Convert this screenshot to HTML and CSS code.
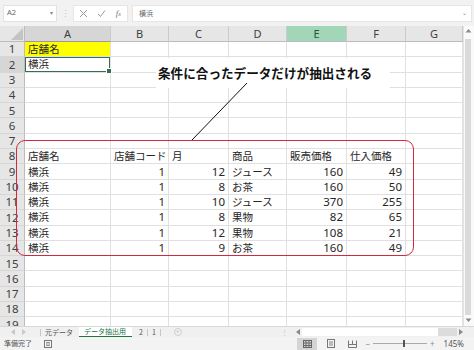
FILE: index.html
```html
<!DOCTYPE html>
<html lang="ja">
<head>
<meta charset="utf-8">
<link rel="stylesheet" href="styles.css">
</head>
<body>
<div class="app">
  <div class="fbar">
    <div class="namebox"><span>A2</span><span class="caret">▾</span></div>
    <div class="vdots">⋮</div>
    <div class="fxbox">
      <svg class="ic" width="9" height="9" viewBox="0 0 9 9"><path d="M1 1L8 8M8 1L1 8" stroke="#9a9a9a" stroke-width="1"/></svg>
      <svg class="ic" width="9" height="9" viewBox="0 0 9 9"><path d="M1 5L3.5 7.5L8 1.5" stroke="#9a9a9a" stroke-width="1" fill="none"/></svg>
      <span class="fx">f<span class="fxs">x</span></span>
    </div>
    <div class="finput"><span>横浜</span><span class="caret">⌄</span></div>
  </div>

  <div class="main">
    <div class="sheet">
      <div class="grid">
        <div class="corner"><svg width="12" height="12" viewBox="0 0 12 12"><path d="M12 0V12H0Z" fill="#c4c4c4"/></svg></div>
        <div class="ch sel">A</div><div class="ch">B</div><div class="ch">C</div><div class="ch">D</div><div class="ch hl">E</div><div class="ch">F</div><div class="ch">G</div>

        <div class="rh">1</div><div class="c a1">店舗名</div><div class="c"></div><div class="c"></div><div class="c"></div><div class="c"></div><div class="c"></div><div class="c"></div>
        <div class="rh rsel">2</div><div class="c active">横浜</div><div class="c"></div><div class="c"></div><div class="c"></div><div class="c"></div><div class="c"></div><div class="c"></div>
        <div class="rh">3</div><div class="c"></div><div class="c"></div><div class="c"></div><div class="c"></div><div class="c"></div><div class="c"></div><div class="c"></div>
        <div class="rh">4</div><div class="c"></div><div class="c"></div><div class="c"></div><div class="c"></div><div class="c"></div><div class="c"></div><div class="c"></div>
        <div class="rh">5</div><div class="c"></div><div class="c"></div><div class="c"></div><div class="c"></div><div class="c"></div><div class="c"></div><div class="c"></div>
        <div class="rh">6</div><div class="c"></div><div class="c"></div><div class="c"></div><div class="c"></div><div class="c"></div><div class="c"></div><div class="c"></div>
        <div class="rh">7</div><div class="c"></div><div class="c"></div><div class="c"></div><div class="c"></div><div class="c"></div><div class="c"></div><div class="c"></div>
        <div class="rh">8</div><div class="c">店舗名</div><div class="c">店舗コード</div><div class="c">月</div><div class="c">商品</div><div class="c">販売価格</div><div class="c">仕入価格</div><div class="c"></div>
        <div class="rh">9</div><div class="c">横浜</div><div class="c n">1</div><div class="c n">12</div><div class="c">ジュース</div><div class="c n">160</div><div class="c n">49</div><div class="c"></div>
        <div class="rh">10</div><div class="c">横浜</div><div class="c n">1</div><div class="c n">8</div><div class="c">お茶</div><div class="c n">160</div><div class="c n">50</div><div class="c"></div>
        <div class="rh">11</div><div class="c">横浜</div><div class="c n">1</div><div class="c n">10</div><div class="c">ジュース</div><div class="c n">370</div><div class="c n">255</div><div class="c"></div>
        <div class="rh">12</div><div class="c">横浜</div><div class="c n">1</div><div class="c n">8</div><div class="c">果物</div><div class="c n">82</div><div class="c n">65</div><div class="c"></div>
        <div class="rh">13</div><div class="c">横浜</div><div class="c n">1</div><div class="c n">12</div><div class="c">果物</div><div class="c n">108</div><div class="c n">21</div><div class="c"></div>
        <div class="rh">14</div><div class="c">横浜</div><div class="c n">1</div><div class="c n">9</div><div class="c">お茶</div><div class="c n">160</div><div class="c n">49</div><div class="c"></div>
        <div class="rh">15</div><div class="c"></div><div class="c"></div><div class="c"></div><div class="c"></div><div class="c"></div><div class="c"></div><div class="c"></div>
        <div class="rh">16</div><div class="c"></div><div class="c"></div><div class="c"></div><div class="c"></div><div class="c"></div><div class="c"></div><div class="c"></div>
        <div class="rh">17</div><div class="c"></div><div class="c"></div><div class="c"></div><div class="c"></div><div class="c"></div><div class="c"></div><div class="c"></div>
        <div class="rh">18</div><div class="c"></div><div class="c"></div><div class="c"></div><div class="c"></div><div class="c"></div><div class="c"></div><div class="c"></div>
        <div class="rh">19</div><div class="c"></div><div class="c"></div><div class="c"></div><div class="c"></div><div class="c"></div><div class="c"></div><div class="c"></div>
      </div>

      <div class="callout">条件に合ったデータだけが抽出される</div>
      <svg class="pointer" width="463" height="300" viewBox="0 0 463 300"><line x1="192" y1="114" x2="247" y2="57" stroke="#111" stroke-width="1"/></svg>
      <div class="redbox"></div>
    </div>

    <div class="vscroll">
      <svg class="arr" width="7" height="5" viewBox="0 0 7 5"><path d="M0.5 4.5L3.5 1L6.5 4.5Z" fill="#8a8a8a"/></svg>
      <div class="thumb"></div>
      <svg class="arr" width="7" height="5" viewBox="0 0 7 5"><path d="M0.5 0.5L3.5 4L6.5 0.5Z" fill="#8a8a8a"/></svg>
    </div>
  </div>

  <div class="tabbar">
    <div class="navs">
      <svg width="4" height="6" viewBox="0 0 4 6"><path d="M4 0V6L0 3Z" fill="#c8c8c8"/></svg>
      <svg width="4" height="6" viewBox="0 0 4 6"><path d="M0 0V6L4 3Z" fill="#c8c8c8"/></svg>
    </div>
    <span class="sep"></span>
    <span class="tab">元データ</span>
    <span class="tab on">データ抽出用</span>
    <span class="tab">2</span>
    <span class="sep"></span>
    <span class="tab">1</span>
    <span class="sep"></span>
    <span class="plus">+</span>
    <span class="grip">⋮</span>
    <div class="hscroll">
      <svg width="4" height="6" viewBox="0 0 4 6"><path d="M4 0V6L0 3Z" fill="#8a8a8a"/></svg>
      <div class="htrack"><div class="hthumb"></div></div>
      <svg width="4" height="6" viewBox="0 0 4 6"><path d="M0 0V6L4 3Z" fill="#8a8a8a"/></svg>
    </div>
  </div>

  <div class="status">
    <span class="ready">準備完了</span>
    <svg class="macro" width="8" height="8" viewBox="0 0 8 8"><rect x="0.5" y="0.5" width="7" height="7" fill="none" stroke="#777"/><path d="M2 2.5H6M2 4H6M2 5.5H6" stroke="#999"/></svg>
    <div class="views">
      <span class="view on"><svg width="9" height="8" viewBox="0 0 9 8"><rect x="0.5" y="0.5" width="8" height="7" fill="none" stroke="#666"/><path d="M0.5 3H8.5M0.5 5.5H8.5M3 0.5V7.5M6 0.5V7.5" stroke="#666"/></svg></span>
      <span class="view"><svg width="8" height="9" viewBox="0 0 8 9"><rect x="0.5" y="0.5" width="7" height="8" fill="none" stroke="#777"/><rect x="2" y="2" width="4" height="5" fill="#bbb"/></svg></span>
      <span class="view"><svg width="9" height="8" viewBox="0 0 9 8"><path d="M0.5 0.5V7.5H8.5V0.5M4.5 0.5V4.5M0.5 4.5H8.5" fill="none" stroke="#777"/></svg></span>
    </div>
    <div class="zoom">
      <span class="zm">−</span>
      <div class="slider"><div class="knob"></div></div>
      <span class="zm">+</span>
      <span class="pct">145%</span>
    </div>
  </div>
</div>
</body>
</html>
```

FILE: styles.css
```css
* { box-sizing: border-box; }
html, body { margin: 0; padding: 0; }
body {
  width: 474px;
  height: 350px;
  overflow: hidden;
  background: #ffffff;
  font-family: "Noto Sans CJK JP", "Noto Sans", sans-serif;
}
.app {
  width: 474px;
  height: 350px;
  display: flex;
  flex-direction: column;
}

/* formula bar */
.fbar {
  height: 26px;
  flex: none;
  background: #f2f2f2;
  display: flex;
  align-items: center;
  padding: 4px 2px 4px 3px;
  gap: 0;
}
.namebox {
  width: 54px;
  height: 17px;
  background: #fff;
  border: 1px solid #e2e2e2;
  display: flex;
  align-items: center;
  justify-content: space-between;
  padding: 0 3px 0 3px;
  font: 7.5px/1 "Noto Sans", sans-serif;
  color: #666;
}
.caret { font-size: 6px; color: #888; }
.vdots {
  width: 16px;
  text-align: center;
  font: 9px/1 "Noto Sans", sans-serif;
  color: #c4c4c4;
}
.fxbox {
  width: 55px;
  height: 17px;
  background: #fff;
  border: 1px solid #e6e6e6;
  display: flex;
  align-items: center;
  justify-content: space-between;
  padding: 0 6px 0 5px;
}
.fx {
  font: italic 9px/1 "Liberation Serif", serif;
  color: #777;
}
.fxs { font-size: 6px; }
.finput {
  flex: 1;
  margin-left: 4px;
  height: 17px;
  background: #fff;
  border: 1px solid #e6e6e6;
  display: flex;
  align-items: center;
  justify-content: space-between;
  padding: 0 4px 0 6px;
  font: 7px/1 "Noto Sans CJK JP", sans-serif;
  color: #666;
}

/* sheet */
.main {
  height: 300px;
  flex: none;
  display: flex;
}
.sheet {
  position: relative;
  width: 463px;
  height: 300px;
  overflow: hidden;
}
.grid {
  display: grid;
  grid-template-columns: 25px 86px 58px 60px 58px 60px 59px 57px;
  grid-template-rows: 16px repeat(19, 15.3px);
}
.corner {
  background: #e6e6e6;
  border-right: 1px solid #bcbcbc;
  border-bottom: 1px solid #bcbcbc;
  display: flex;
  align-items: flex-end;
  justify-content: flex-end;
  padding: 0 1px 1px 0;
}
.ch {
  background: #e6e6e6;
  border-right: 1px solid #cacaca;
  border-bottom: 1px solid #bcbcbc;
  display: flex;
  align-items: center;
  justify-content: center;
  font: 11px/1 "Noto Sans", sans-serif;
  color: #404040;
}
.ch.sel { background: #d6d6d6; border-bottom-color: #9a9a9a; }
.ch.hl { background: #a1d6b8; color: #2f4f3c; }
.rh {
  background: #e6e6e6;
  border-right: 1px solid #bcbcbc;
  border-bottom: 1px solid #d6d6d6;
  display: flex;
  align-items: center;
  justify-content: center;
  font: 11.5px/1 "Noto Sans", sans-serif;
  color: #404040;
  overflow: hidden;
}
.rh.rsel { background: #d6d6d6; }
.c {
  border-right: 1px solid #e0e0e0;
  border-bottom: 1px solid #e0e0e0;
  display: flex;
  align-items: center;
  padding: 0 3px;
  white-space: nowrap;
  overflow: hidden;
  font: 10.5px/14px "Noto Sans CJK JP", sans-serif;
  color: #262626;
}
.c.n {
  justify-content: flex-end;
  font: 11.5px/14px "Noto Sans", sans-serif;
}
.c.a1 { background: #ffff00; }
.c.active {
  position: relative;
  overflow: visible;
  box-shadow: inset 0 0 0 1px #3a6e52;
}
.c.active::after {
  content: "";
  position: absolute;
  right: -2px;
  bottom: -2px;
  width: 4px;
  height: 4px;
  background: #3a6e52;
  border: 1px solid #fff;
}

/* overlays */
.callout {
  position: absolute;
  left: 156px;
  top: 32px;
  width: 234px;
  height: 30px;
  background: #fff;
  padding-left: 2px;
  font: 700 12.6px/30px "Noto Sans CJK JP", sans-serif;
  color: #111;
  white-space: nowrap;
}
.pointer {
  position: absolute;
  left: 0;
  top: 0;
}
.redbox {
  position: absolute;
  left: 16px;
  top: 114px;
  width: 398px;
  height: 116px;
  border: 1.5px solid #d22a3c;
  border-radius: 9px;
}

/* vertical scrollbar */
.vscroll {
  width: 11px;
  height: 300px;
  background: #fafafa;
  border-left: 1px solid #e4e4e4;
  display: flex;
  flex-direction: column;
  align-items: center;
  padding: 2px 2px 3px 0;
  gap: 3px;
}
.vscroll .arr { flex: none; }
.vscroll .thumb {
  flex: 1;
  width: 6px;
  background: #dadada;
  margin-top: 3px;
}

/* tab bar */
.tabbar {
  height: 11px;
  flex: none;
  background: #f0f0f0;
  border-top: 1px solid #d8d8d8;
  display: flex;
  align-items: center;
  font: 7px/1 "Noto Sans CJK JP", sans-serif;
  color: #555;
}
.navs {
  width: 40px;
  display: flex;
  gap: 7px;
  padding-left: 11px;
}
.sep {
  width: 1px;
  height: 7px;
  background: #c6c6c6;
}
.tab {
  padding: 0 4px;
  height: 10px;
  display: flex;
  align-items: center;
}
.tab.on {
  background: #fff;
  color: #217346;
  border-bottom: 1px solid #217346;
  padding: 0 6px 0 5px;
  margin: 0 3px 0 2px;
}
.plus {
  margin-left: 13px;
  width: 8px;
  height: 8px;
  border: 1px solid #cfcfcf;
  border-radius: 50%;
  display: flex;
  align-items: center;
  justify-content: center;
  font-size: 6px;
  color: #bbb;
}
.grip {
  margin-left: 99px;
  color: #bbb;
  font-size: 7px;
}
.hscroll {
  margin-left: 6px;
  width: 173px;
  display: flex;
  align-items: center;
  gap: 2px;
  padding: 0 4px 0 2px;
}
.htrack {
  flex: 1;
  height: 8px;
  background: #dcdcdc;
}
.hthumb {
  width: 136px;
  height: 8px;
  background: #fff;
}

/* status bar */
.status {
  height: 13px;
  flex: none;
  background: #f3f3f3;
  display: flex;
  align-items: center;
  font: 7px/1 "Noto Sans CJK JP", sans-serif;
  color: #555;
  padding-left: 4px;
}
.macro { margin-left: 12px; }
.views {
  margin-left: auto;
  display: flex;
  align-items: center;
  gap: 7px;
}
.view {
  width: 14px;
  height: 12px;
  display: flex;
  align-items: center;
  justify-content: center;
}
.view.on { background: #d4d4d4; width: 20px; }
.zoom {
  display: flex;
  align-items: center;
  margin-left: 6px;
  padding-right: 10px;
  gap: 3px;
}
.zm { font: 8px/1 "Noto Sans", sans-serif; color: #888; }
.slider {
  position: relative;
  width: 54px;
  height: 1px;
  background: #aaa;
}
.knob {
  position: absolute;
  left: 30px;
  top: -3px;
  width: 2px;
  height: 7px;
  background: #555;
}
.pct { margin-left: 6px; font: 8px/1 "Noto Sans", sans-serif; color: #555; }
```
